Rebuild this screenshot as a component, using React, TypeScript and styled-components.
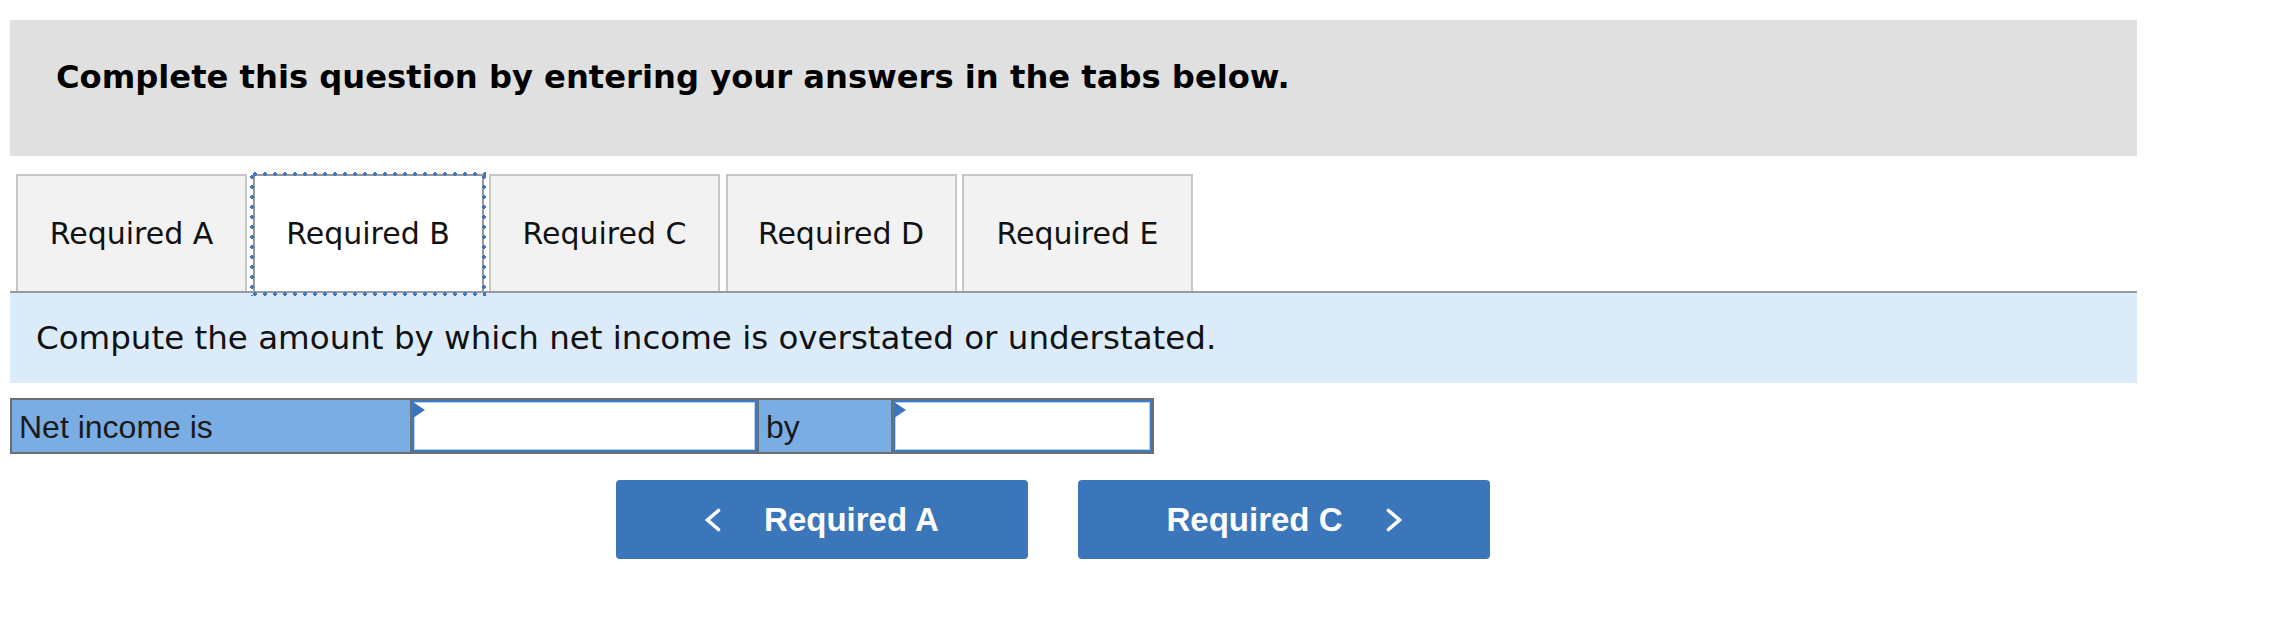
import styled, { createGlobalStyle, css } from "styled-components";

const GlobalStyle = createGlobalStyle`
	html,
	body {
		margin: 0;
		padding: 0;
		background: #fff;
	}
`;

const tabs = ["Required A", "Required B", "Required C", "Required D", "Required E"];

function Chevron({ dir }: { dir: "left" | "right" }) {
	const points = dir === "left" ? "13.5,2.5 2.5,12 13.5,21.5" : "2.5,2.5 13.5,12 2.5,21.5";
	return (
		<svg width="16" height="24" viewBox="0 0 16 24" aria-hidden="true">
			<polyline points={points} fill="none" stroke="#fff" strokeWidth="3.6" strokeLinecap="round" strokeLinejoin="miter" />
		</svg>
	);
}

function App() {
	return (
		<>
			<GlobalStyle />
			<Page>
				<Header>
					<Title>Complete this question by entering your answers in the tabs below.</Title>
				</Header>
				<TabBar>
					{tabs.map((tab) => (
						<Tab key={tab} $active={tab === "Required B"}>
							{tab}
						</Tab>
					))}
				</TabBar>
				<Prompt>Compute the amount by which net income is overstated or understated.</Prompt>
				<Answer.Row>
					<Answer.Label $width={398}>Net income is</Answer.Label>
					<Answer.Field $width={347}>
						<Answer.Input />
					</Answer.Field>
					<Answer.Label $width={134}>by</Answer.Label>
					<Answer.Field $width={261}>
						<Answer.Input />
					</Answer.Field>
				</Answer.Row>
				<Nav>
					<NavButton>
						<Chevron dir="left" />
						<span>Required A</span>
					</NavButton>
					<NavButton>
						<span>Required C</span>
						<Chevron dir="right" />
					</NavButton>
				</Nav>
			</Page>
		</>
	);
}
export default App;

const Page = styled.div`
	width: 2127px;
	padding: 20px 0 40px 10px;
`;

const Header = styled.div`
	box-sizing: border-box;
	height: 136px;
	padding: 38px 0 0 46px;
	background: #e0e0e0;
`;

const Title = styled.h1`
	margin: 0;
	color: #000;
	font-family: "DejaVu Sans", Verdana, sans-serif;
	font-size: 32.2px;
	font-weight: 700;
	line-height: normal;
`;

const TabBar = styled.div`
	display: flex;
	gap: 5.5px;
	margin-top: 18px;
	padding-left: 6px;
	border-bottom: 2px solid #9a9a9a;
`;

const dot = "radial-gradient(circle, #3a78c4 1.6px, transparent 2px)";

const dottedRing = css`
	&::after {
		content: "";
		position: absolute;
		inset: -4.5px -4.5px -4.5px -5px;
		pointer-events: none;
		background:
			${dot} left top / 10px 4px repeat-x,
			${dot} left bottom / 10px 4px repeat-x,
			${dot} left top / 4px 10px repeat-y,
			${dot} right top / 4px 10px repeat-y;
	}
`;

const Tab = styled.div<{ $active?: boolean }>`
	position: relative;
	box-sizing: border-box;
	width: 231px;
	height: 117px;
	display: flex;
	align-items: center;
	justify-content: center;
	border: 2px solid ${(p) => (p.$active ? "#999" : "#c6c6c6")};
	border-bottom: none;
	background: ${(p) => (p.$active ? "#fff" : "#f2f2f2")};
	color: #111;
	font-family: "DejaVu Sans", Verdana, sans-serif;
	font-size: 30px;
	line-height: normal;
	cursor: pointer;
	${(p) => p.$active && dottedRing}
`;

const Prompt = styled.div`
	box-sizing: border-box;
	height: 90px;
	display: flex;
	align-items: center;
	padding-left: 26px;
	background: #dbebf9;
	color: #111;
	font-family: "DejaVu Sans", Verdana, sans-serif;
	font-size: 32.5px;
`;

const Answer = {
	Row: styled.div`
		box-sizing: border-box;
		width: 1144px;
		height: 56px;
		display: flex;
		margin-top: 15px;
		border: 2px solid #6e6e6e;

		& > * + * {
			border-left: 2px solid #6e6e6e;
		}
	`,
	Label: styled.div<{ $width: number }>`
		box-sizing: border-box;
		width: ${(p) => p.$width}px;
		display: flex;
		align-items: center;
		padding: 2px 0 0 7px;
		background: #7aade3;
		color: #1b1b1b;
		font-family: "Liberation Sans", Arial, sans-serif;
		font-size: 32px;
	`,
	Field: styled.div<{ $width: number }>`
		position: relative;
		box-sizing: border-box;
		width: ${(p) => p.$width}px;
		display: flex;

		&::before {
			content: "";
			position: absolute;
			left: 1px;
			top: 2px;
			border-top: 8px solid transparent;
			border-bottom: 8px solid transparent;
			border-left: 12px solid #3a76bd;
		}
	`,
	Input: styled.input`
		flex: 1;
		min-width: 0;
		margin: 0;
		padding: 0 10px;
		border: 2px solid #3d7bc3;
		box-shadow: inset 0 0 0 1px #b9d1ec;
		background: #fff;
		font-family: "Liberation Sans", Arial, sans-serif;
		font-size: 31px;
		outline: none;
	`,
};

const Nav = styled.div`
	display: flex;
	gap: 50px;
	margin-top: 26px;
	padding-left: 606px;
`;

const NavButton = styled.button`
	width: 412px;
	height: 79px;
	display: flex;
	align-items: center;
	justify-content: center;
	gap: 43px;
	padding: 0;
	border: none;
	border-radius: 4px;
	background: #3a76b9;
	color: #fff;
	font-family: "Liberation Sans", Arial, sans-serif;
	font-size: 33px;
	font-weight: 700;
	cursor: pointer;
`;
